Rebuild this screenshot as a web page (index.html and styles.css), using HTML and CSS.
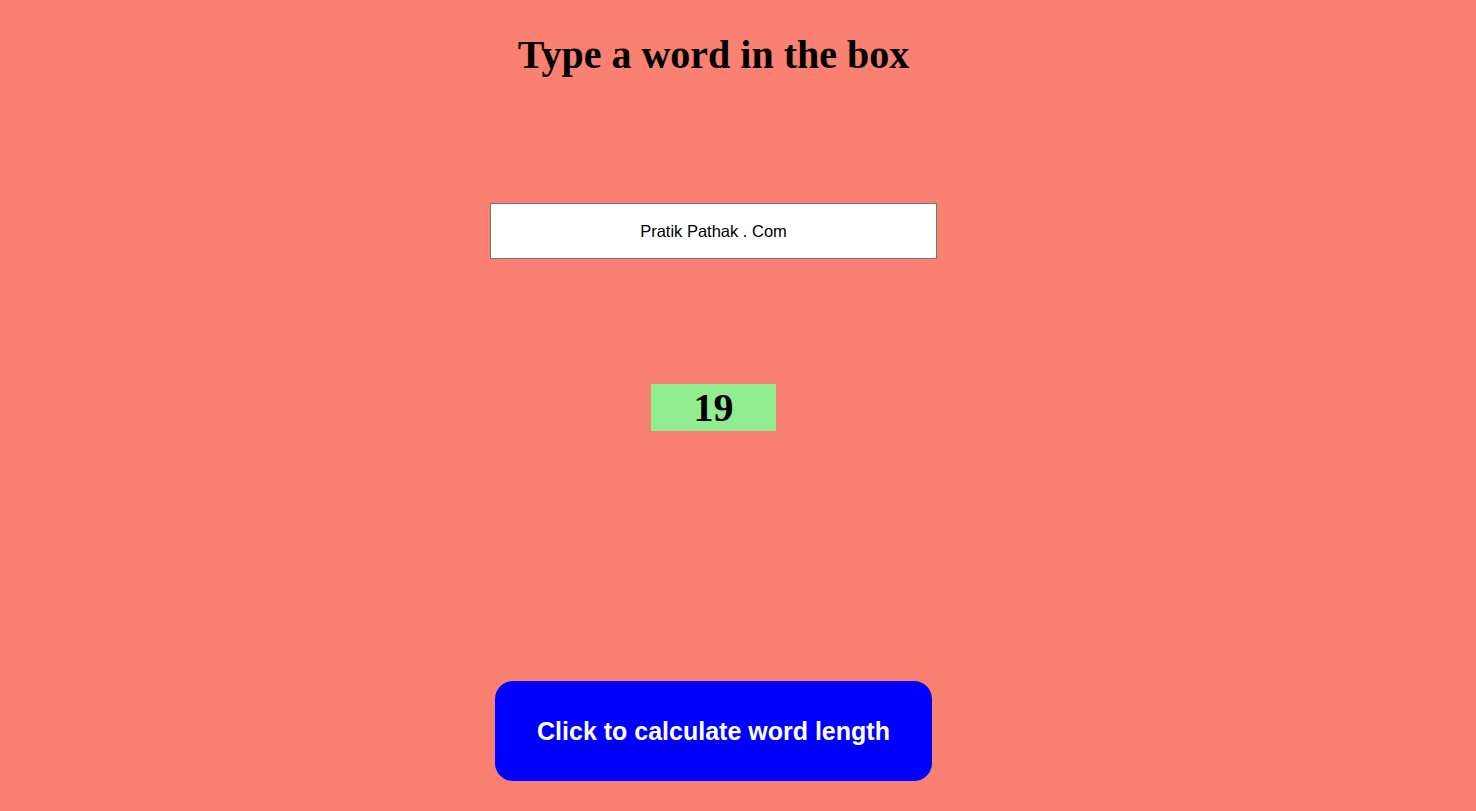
FILE: index.html
```html
<!DOCTYPE html>
<html>
<head>
<meta charset="utf-8">
<link rel="stylesheet" href="styles.css">
</head>
<body>
<main class="page">
  <h1 class="title">Type a word in the box</h1>
  <input class="word-input" type="text" value="Pratik Pathak . Com">
  <div class="result">19</div>
  <button class="calc-btn">Click to calculate word length</button>
</main>
</body>
</html>
```
FILE: styles.css
```css
html, body {
  margin: 0;
  padding: 0;
  background: #fa8072;
  height: 100%;
  overflow: hidden;
}
.page {
  width: 1427px;
  display: flex;
  flex-direction: column;
  align-items: center;
}
.title {
  margin: 32px 0 0;
  font-family: "Liberation Serif", "Times New Roman", serif;
  font-size: 40px;
  font-weight: bold;
  line-height: 46px;
  color: #000;
}
.word-input {
  margin-top: 125px;
  box-sizing: border-box;
  width: 447px;
  height: 56px;
  border: 1px solid #767676;
  background: #fff;
  font-family: "Liberation Sans", Arial, sans-serif;
  font-size: 16.5px;
  color: #000;
  text-align: center;
  padding: 0;
  outline: none;
}
.result {
  margin-top: 125px;
  width: 125px;
  height: 47px;
  background: #90ee90;
  font-family: "Liberation Serif", "Times New Roman", serif;
  font-size: 40px;
  font-weight: bold;
  line-height: 47px;
  text-align: center;
  color: #000;
}
.calc-btn {
  margin-top: 250px;
  width: 437px;
  height: 100px;
  border: none;
  border-radius: 18px;
  background: #0000ff;
  color: #fff;
  font-family: "Liberation Sans", Arial, sans-serif;
  font-size: 25px;
  font-weight: bold;
  padding: 0;
}
```
